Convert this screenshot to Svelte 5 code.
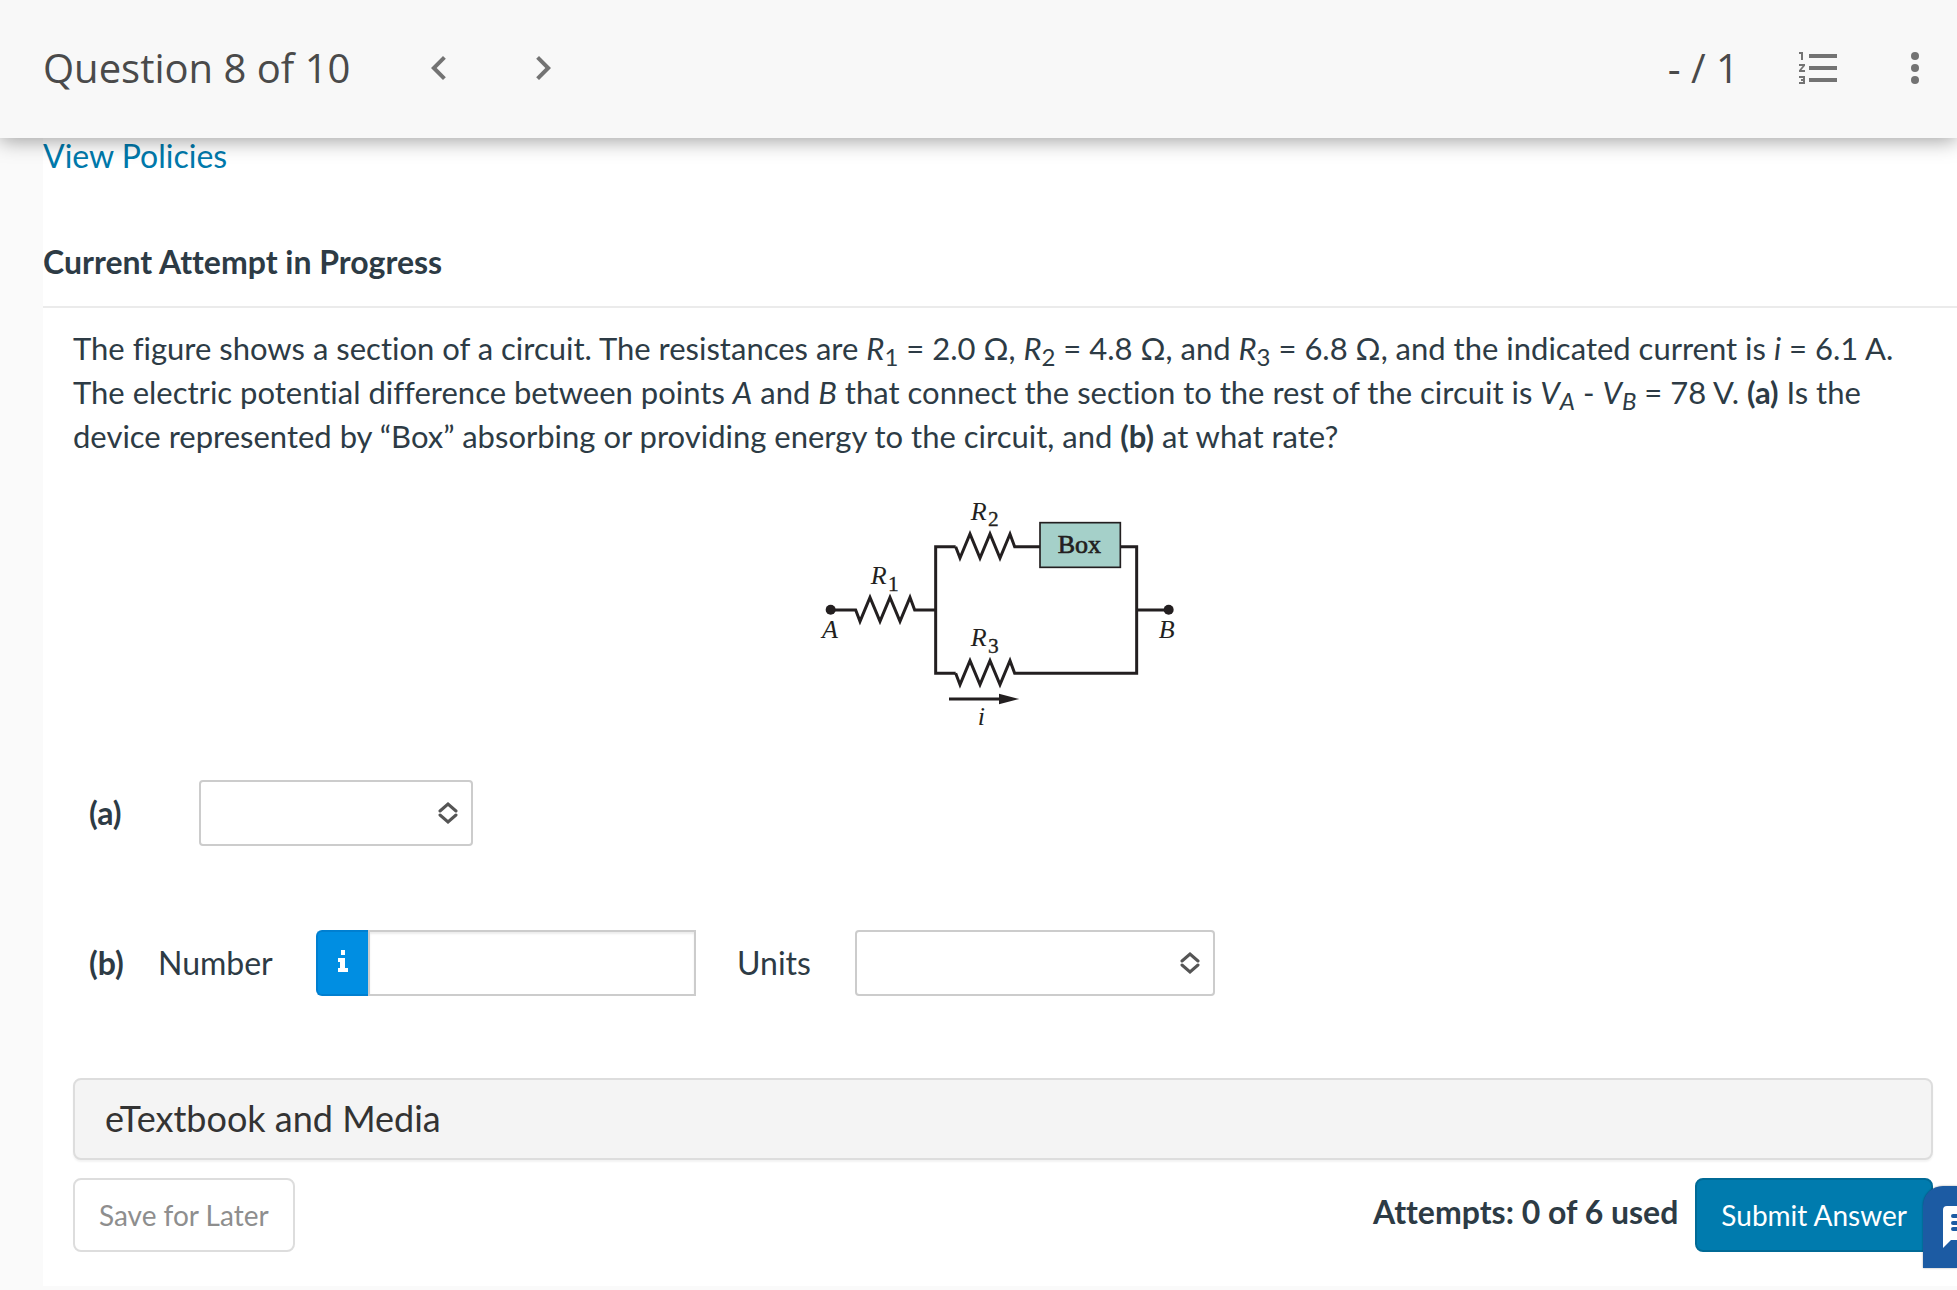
<script lang="ts">
  let answerA = "";
  let answerB = "";
  let units = "";

  const zigzag = "l13 34 l30 -72 l30 72 l30 -72 l30 72 l30 -72 l14 38";
</script>

<header>
  <h1>Question 8 of 10</h1>
  <nav>
    <button class="icon" aria-label="Previous question">
      <svg viewBox="0 0 24 24"><path d="M15.41 7.41 14 6l-6 6 6 6 1.41-1.41L10.83 12z" /></svg>
    </button>
    <button class="icon" aria-label="Next question">
      <svg viewBox="0 0 24 24"><path d="M10 6 8.59 7.41 13.17 12l-4.58 4.59L10 18l6-6z" /></svg>
    </button>
  </nav>
  <div class="score">- / 1</div>
  <div class="tools">
    <button class="icon" aria-label="Question list">
      <svg viewBox="0 0 24 24">
        <path d="M2 17h2v.5H3v1h1v.5H2v1h3v-4H2v1zm1-9h1V4H2v1h1v3zm-1 3h1.8L2 13.1v.9h3v-1H3.2L5 10.9V10H2v1zm5-6v2h14V5H7zm0 14h14v-2H7v2zm0-6h14v-2H7v2z" />
      </svg>
    </button>
    <button class="icon" aria-label="More options">
      <svg viewBox="0 0 24 24">
        <circle cx="12" cy="6" r="2" />
        <circle cx="12" cy="12" r="2" />
        <circle cx="12" cy="18" r="2" />
      </svg>
    </button>
  </div>
</header>

<main>
  <a class="policies" href="#policies">View Policies</a>
  <h2>Current Attempt in Progress</h2>

  <div class="question">
    <p>
      The figure shows a section of a circuit. The resistances are <em>R</em><sub>1</sub> = 2.0 Ω,
      <em>R</em><sub>2</sub> = 4.8 Ω, and <em>R</em><sub>3</sub> = 6.8 Ω, and the indicated current is
      <em>i</em> = 6.1 A. The electric potential difference between points <em>A</em> and <em>B</em> that
      connect the section to the rest of the circuit is <em>V<sub>A</sub></em> - <em>V<sub>B</sub></em> = 78
      V. <b>(a)</b> Is the device represented by “Box” absorbing or providing energy to the circuit, and
      <b>(b)</b> at what rate?
    </p>

    <svg class="circuit" viewBox="51 39 1116 720" role="img" aria-label="Circuit between A and B">
      <g class="wire">
        <path d="M92 390 H167 {zigzag} H407" />
        <path d="M467 200 H407 V580 H467" />
        <path d="M467 200 {zigzag} H720" />
        <path d="M467 580 {zigzag} H1010 V200 H960" />
        <path d="M1010 390 H1106" />
        <path d="M447 657 H600" />
      </g>
      <rect class="box" x="720" y="128" width="241" height="134" />
      <circle cx="92" cy="389" r="15" />
      <circle cx="1106" cy="389" r="15" />
      <path d="M597 641 L658 657 L597 673 Z" />
      <g class="names">
        <text x="212" y="311">R</text>
        <text x="512" y="120">R</text>
        <text x="512" y="498">R</text>
        <text x="66" y="474">A</text>
        <text x="1076" y="474">B</text>
        <text x="533" y="736">i</text>
      </g>
      <g class="digits">
        <text x="264" y="334">1</text>
        <text x="564" y="138">2</text>
        <text x="564" y="520">3</text>
        <text class="boxname" x="773" y="220">Box</text>
      </g>
    </svg>

    <div class="row">
      <label class="part-a" for="answer-a"><b>(a)</b></label>
      <div class="select short">
        <select id="answer-a" bind:value={answerA}><option value=""></option></select>
        <svg viewBox="0 0 20 22"><path d="M2 9 10 2 18 9 M2 13 10 20 18 13" /></svg>
      </div>
    </div>

    <div class="row">
      <b class="part-b">(b)</b>
      <label class="number" for="answer-b">Number</label>
      <button class="info" aria-label="Input help">
        <svg viewBox="0 0 10 22"><path d="M3 0h4v5H3z M0 8h7v10h3v4H0v-4h2v-6H0z" /></svg>
      </button>
      <input id="answer-b" type="text" bind:value={answerB} />
      <label class="units" for="units">Units</label>
      <div class="select long">
        <select id="units" bind:value={units}><option value=""></option></select>
        <svg viewBox="0 0 20 22"><path d="M2 9 10 2 18 9 M2 13 10 20 18 13" /></svg>
      </div>
    </div>

    <button class="media">eTextbook and Media</button>

    <div class="actions">
      <button class="save">Save for Later</button>
      <div class="attempts">Attempts: 0 of 6 used</div>
      <button class="submit">Submit Answer</button>
    </div>
  </div>
</main>

<button class="chat" aria-label="Open chat">
  <svg viewBox="0 0 42 42">
    <path d="M4 0H38a4 4 0 0 1 4 4V30a4 4 0 0 1-4 4H8L0 42V4a4 4 0 0 1 4-4z" />
    <path class="lines" d="M10 10H32 M10 17H32 M10 23H26" />
  </svg>
</button>

<style>
  :global(body) {
    background-color: #fafafa;
    color: #2d3b45;
    font-family: Lato, sans-serif;
    font-size: 32px;
    font-variant-ligatures: none;
    line-height: 44px;
  }

  button,
  input,
  select {
    box-sizing: border-box;
    font-family: inherit;
    margin: 0;
  }

  button {
    cursor: pointer;
  }

  header {
    position: relative;
    z-index: 1;
    display: flex;
    align-items: center;
    box-sizing: border-box;
    height: 138px;
    padding: 0 18px 2px 43px;
    background-color: #f8f8f8;
    box-shadow: 0 2px 20px rgba(0, 0, 0, 0.4);
    color: #4a4a4a;
    font-family: "Open Sans", sans-serif;
    font-size: 40px;
  }

  h1 {
    margin: 0;
    font-size: 40px;
    font-weight: 400;
  }

  nav {
    display: flex;
    gap: 56px;
    margin-left: 65px;
  }

  .score {
    margin-left: auto;
    margin-right: 56px;
  }

  .tools {
    display: flex;
    gap: 48px;
  }

  .icon {
    width: 48px;
    height: 48px;
    padding: 0;
    border: 0;
    background: none;
  }

  .icon svg {
    display: block;
    fill: #737373;
  }

  main {
    margin-left: 43px;
    padding-bottom: 34px;
    background-color: #fff;
  }

  .policies {
    display: block;
    color: #0079ab;
    line-height: 36px;
    text-decoration: none;
  }

  h2 {
    margin: 66px 0 0;
    padding-bottom: 22px;
    border-bottom: 2px solid #ebebeb;
    font-size: 32px;
  }

  .question {
    padding: 18px 24px 0 30px;
  }

  p {
    margin: 0;
    font-size: 31px;
  }

  sub {
    position: relative;
    bottom: -6px;
    font-size: 24px;
    line-height: 0;
    vertical-align: baseline;
  }

  .circuit {
    display: block;
    width: 372px;
    margin: 35px auto 47px;
    fill: #231f20;
  }

  .wire {
    fill: none;
    stroke: #231f20;
    stroke-width: 9;
  }

  .box {
    fill: #a5d0c9;
    stroke: #231f20;
    stroke-width: 5;
  }

  .names {
    font-family: "Liberation Serif", serif;
    font-size: 78px;
    font-style: italic;
  }

  .digits {
    font-family: "Liberation Serif", serif;
    font-size: 64px;
    stroke: #231f20;
    stroke-width: 1;
  }

  .boxname {
    font-size: 78px;
    stroke-width: 2;
  }

  .row {
    display: flex;
    align-items: center;
    margin-bottom: 84px;
    padding-left: 16px;
  }

  .part-a {
    width: 110px;
  }

  .part-b {
    width: 69px;
  }

  .number {
    width: 158px;
  }

  .units {
    width: 118px;
    margin-left: 41px;
  }

  .select {
    display: grid;
    align-items: center;
  }

  .select select,
  .select svg {
    grid-area: 1 / 1;
  }

  .select svg {
    justify-self: end;
    width: 20px;
    margin-right: 15px;
    fill: none;
    pointer-events: none;
    stroke: #555;
    stroke-linecap: round;
    stroke-width: 3;
  }

  .short {
    width: 274px;
  }

  .long {
    width: 360px;
  }

  select {
    width: 100%;
    height: 66px;
    padding: 0 48px 0 16px;
    border: 2px solid #ccc;
    border-radius: 4px;
    appearance: none;
    background-color: #fff;
    font-size: 28px;
  }

  .info {
    display: flex;
    align-items: center;
    justify-content: center;
    width: 52px;
    height: 66px;
    padding: 0 0 4px;
    border: 2px solid #007fd0;
    border-right: 0;
    border-radius: 6px 0 0 6px;
    background-color: #008ee2;
  }

  .info svg {
    width: 10px;
    fill: #fff;
  }

  input {
    width: 328px;
    height: 66px;
    padding: 0 16px;
    border: 2px solid #ccc;
    border-radius: 0;
    box-shadow: inset 0 2px 2px rgba(0, 0, 0, 0.08);
    font-size: 28px;
  }

  .media {
    display: block;
    width: 100%;
    height: 82px;
    margin: -2px 0 18px;
    padding: 0 30px 2px;
    border: 2px solid #ddd;
    border-radius: 8px;
    background-color: #f4f4f4;
    box-shadow: 0 2px 2px rgba(0, 0, 0, 0.05);
    color: #333;
    font-size: 36px;
    text-align: left;
  }

  .actions {
    display: flex;
    align-items: center;
  }

  .save,
  .submit {
    height: 74px;
    padding: 0 24px;
    border: 2px solid #ddd;
    border-radius: 8px;
    background-color: #fff;
    color: #8e8e8e;
    font-size: 28px;
  }

  .submit {
    border-color: #006a96;
    background-color: #007bae;
    color: #fff;
  }

  .attempts {
    margin-left: auto;
    padding: 0 17px 6px 0;
    font-weight: 700;
  }

  .chat {
    position: fixed;
    z-index: 2;
    right: 0;
    bottom: 22px;
    width: 34px;
    height: 82px;
    padding: 0 0 0 20px;
    border: 0;
    border-radius: 20px 0 0 0;
    background-color: #1c5ba3;
    box-shadow: 0 0 2px rgba(0, 0, 0, 0.4);
    overflow: hidden;
  }

  .chat svg {
    display: block;
    width: 42px;
    fill: #fff;
  }

  .chat .lines {
    fill: none;
    stroke: #1c5ba3;
    stroke-linecap: round;
    stroke-width: 4;
  }
</style>
